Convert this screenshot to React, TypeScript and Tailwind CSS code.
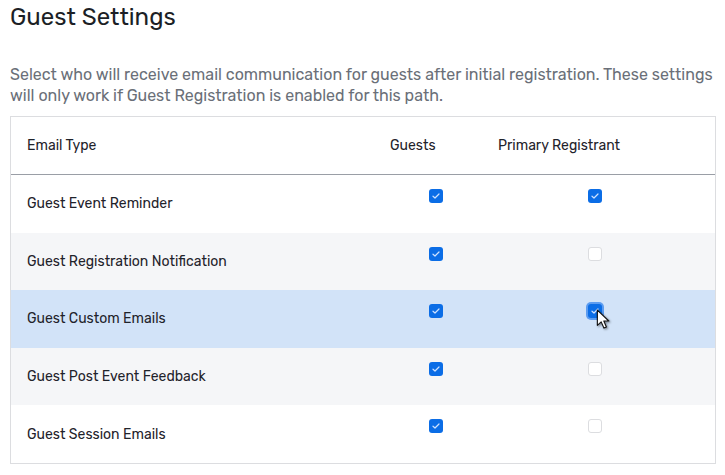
import React from "react";

const rows = [
  { name: "Guest Event Reminder", guests: true, primary: true, bg: "bg-white" },
  { name: "Guest Registration Notification", guests: true, primary: false, bg: "bg-[#f5f6f8]" },
  { name: "Guest Custom Emails", guests: true, primary: true, bg: "bg-[#d2e3f8]", focus: true },
  { name: "Guest Post Event Feedback", guests: true, primary: false, bg: "bg-[#f5f6f8]" },
  { name: "Guest Session Emails", guests: true, primary: false, bg: "bg-white" },
];

function Box({ checked, focus }: { checked: boolean; focus?: boolean }) {
  if (checked) {
    return (
      <div
        className={
          "w-[14px] h-[14px] rounded-[3px] bg-[#0b6de6] flex items-center justify-center " +
          (focus ? "ring-[2px] ring-[#5c9cf0]" : "")
        }
      >
        <svg width="10" height="10" viewBox="0 0 10 10">
          <path d="M2 5.2 L4 7 L8 3" fill="none" stroke="#cfe2ff" strokeWidth="1.2" strokeLinecap="round" strokeLinejoin="round" />
        </svg>
      </div>
    );
  }
  return <div className="w-[14px] h-[14px] rounded-[3px] bg-white border border-[#dcdde0]" />;
}

function Cursor() {
  return (
    <svg className="absolute left-[8px] top-[5px]" width="18" height="24" viewBox="0 0 16 22">
      <defs>
        <filter id="sh" x="-50%" y="-50%" width="200%" height="200%">
          <feDropShadow dx="1" dy="1" stdDeviation="1" floodColor="#000" floodOpacity="0.45" />
        </filter>
      </defs>
      <path
        d="M1 1 L1 15 L4.5 11.8 L7 17.5 L9.3 16.5 L6.9 11 L11.5 11 Z"
        fill="#fff"
        stroke="#111"
        strokeWidth="1"
        strokeLinejoin="round"
        filter="url(#sh)"
      />
    </svg>
  );
}

export default function App() {
  return (
    <div className="w-[725px] h-[475px] bg-white overflow-hidden px-[10px] font-['Rubik','Noto_Sans','Liberation_Sans',sans-serif]">
      <h1 className="text-[24px] leading-[30px] pt-[2px] text-[#1c1f26] font-normal">Guest Settings</h1>
      <p className="mt-[32px] text-[16px] leading-[21px] text-[#6a6f78] whitespace-nowrap">
        Select who will receive email communication for guests after initial registration. These settings
        <br />
        will only work if Guest Registration is enabled for this path.
      </p>
      <div className="mt-[10px] w-[706px] border border-[#dcdde0] text-[14px] text-[#1f232b]">
        <div className="flex h-[58px] items-center border-b border-[#9a9ea6]">
          <div className="w-[363px] pl-[16px]">Email Type</div>
          <div className="w-[108px] pl-[16px]">Guests</div>
          <div className="flex-1 pl-[16px]">Primary Registrant</div>
        </div>
        {rows.map((r) => (
          <div key={r.name} className={"flex h-[57.6px] " + r.bg}>
            <div className="w-[363px] pl-[16px] flex items-center">{r.name}</div>
            <div className="w-[108px] pt-[14px] pl-[55px]">
              <Box checked={r.guests} />
            </div>
            <div className="flex-1 pt-[14px] pl-[106px]">
              <div className="relative w-[14px] h-[14px]">
                <Box checked={r.primary} focus={r.focus} />
                {r.focus && <Cursor />}
              </div>
            </div>
          </div>
        ))}
      </div>
    </div>
  );
}
